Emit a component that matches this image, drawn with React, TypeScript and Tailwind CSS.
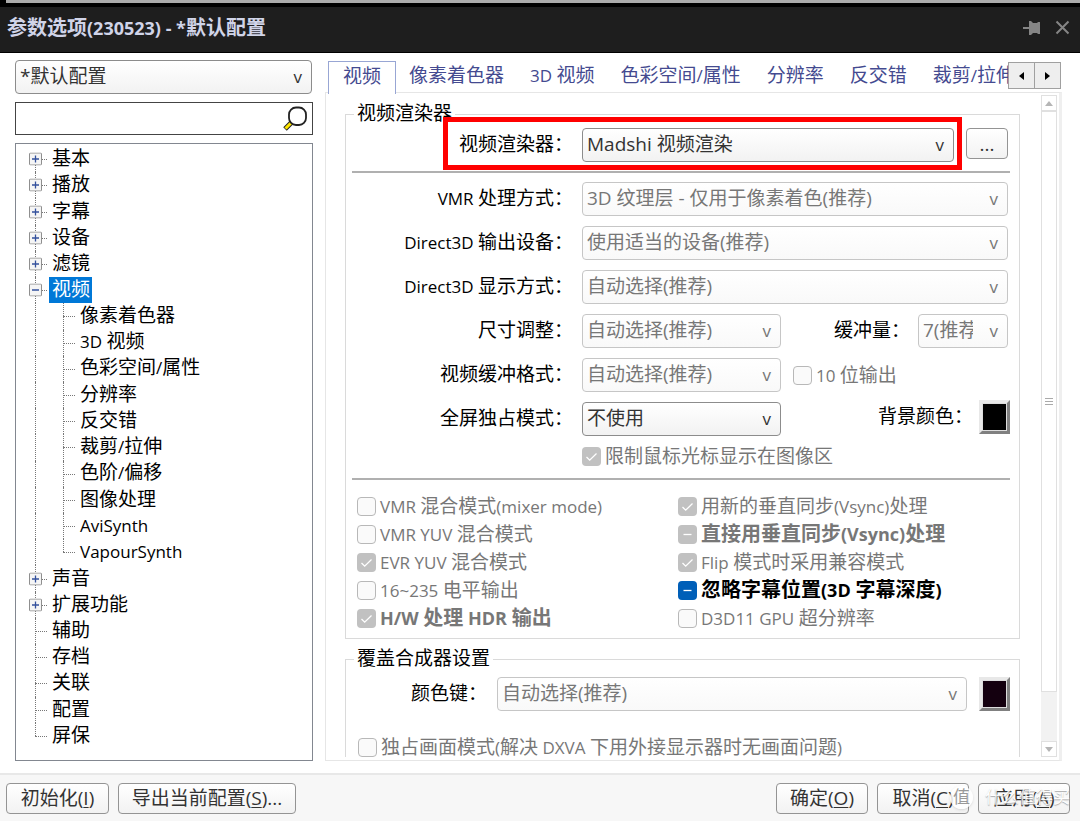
import { Fragment, useState } from "react";
import type { ReactNode } from "react";
import clsx from "clsx";

type CheckState = "off" | "on" | "mixed";

const TREE = [
  { label: "基本", level: 0, box: "+" },
  { label: "播放", level: 0, box: "+" },
  { label: "字幕", level: 0, box: "+" },
  { label: "设备", level: 0, box: "+" },
  { label: "滤镜", level: 0, box: "+" },
  { label: "视频", level: 0, box: "-" },
  { label: "像素着色器", level: 1 },
  { label: "3D 视频", level: 1 },
  { label: "色彩空间/属性", level: 1 },
  { label: "分辨率", level: 1 },
  { label: "反交错", level: 1 },
  { label: "裁剪/拉伸", level: 1 },
  { label: "色阶/偏移", level: 1 },
  { label: "图像处理", level: 1 },
  { label: "AviSynth", level: 1 },
  { label: "VapourSynth", level: 1, last: true },
  { label: "声音", level: 0, box: "+" },
  { label: "扩展功能", level: 0, box: "+" },
  { label: "辅助", level: 0 },
  { label: "存档", level: 0 },
  { label: "关联", level: 0 },
  { label: "配置", level: 0 },
  { label: "屏保", level: 0, last: true },
];

const TABS = ["视频", "像素着色器", "3D 视频", "色彩空间/属性", "分辨率", "反交错", "裁剪/拉伸"];

const OPTIONS: { label: string; state: CheckState; bold?: boolean; enabled?: boolean }[] = [
  { label: "VMR 混合模式(mixer mode)", state: "off" },
  { label: "用新的垂直同步(Vsync)处理", state: "on" },
  { label: "VMR YUV 混合模式", state: "off" },
  { label: "直接用垂直同步(Vsync)处理", state: "mixed", bold: true },
  { label: "EVR YUV 混合模式", state: "on" },
  { label: "Flip 模式时采用兼容模式", state: "on" },
  { label: "16~235 电平输出", state: "off" },
  { label: "忽略字幕位置(3D 字幕深度)", state: "mixed", bold: true, enabled: true },
  { label: "H/W 处理 HDR 输出", state: "on", bold: true },
  { label: "D3D11 GPU 超分辨率", state: "off" },
];

// Latin runs are set a little smaller than the Chinese around them
function Mixed({ text, bold }: { text: string; bold?: boolean }) {
  return (
    <span className={clsx(bold && "text-[20px] font-bold")}>
      {text.split(/([\x20-\x7e]+)/).map((part, i) =>
        i % 2 ? (
          <span key={i} className={bold ? "text-[18px]" : "text-[17px]"}>
            {part}
          </span>
        ) : (
          <Fragment key={i}>{part}</Fragment>
        )
      )}
    </span>
  );
}

function Combo({ id, value, disabled, label, className }: { id: string; value: string; disabled?: boolean; label?: string; className?: string }) {
  return (
    <div className={clsx("relative h-[34px]", className)}>
      <select
        id={id}
        disabled={disabled}
        aria-label={label}
        className="h-full w-full appearance-none rounded-sm border border-[#8c8c8c] bg-linear-to-b from-white to-[#f2f2f2] pr-[34px] pb-0.5 pl-1 text-[#333] disabled:border-[#c6c6c6] disabled:to-[#f9f9f9] disabled:text-[#777] disabled:opacity-100"
      >
        <option>{value}</option>
      </select>
      <span
        aria-hidden="true"
        className={clsx("pointer-events-none absolute inset-y-0 right-[10px] flex items-center text-[17px]", disabled ? "text-[#777]" : "text-[#333]")}
      >
        v
      </span>
    </div>
  );
}

function Check({ label, state = "off", bold, enabled, className }: { label: string; state?: CheckState; bold?: boolean; enabled?: boolean; className?: string }) {
  return (
    <label className={clsx("flex h-7 items-center gap-1 whitespace-nowrap", enabled ? "text-black" : "text-[#777]", className)}>
      <span className="relative size-[19px] shrink-0">
        <input
          type="checkbox"
          disabled={!enabled}
          defaultChecked={state === "on"}
          ref={(el) => {
            if (el) el.indeterminate = state === "mixed";
          }}
          className={clsx(
            "block size-[19px] appearance-none rounded",
            state === "off" && "border border-[#b8b8b8] bg-[#fafafa]",
            state !== "off" && (enabled ? "bg-[#005fb8]" : "bg-[#c1c1c1]")
          )}
        />
        {state !== "off" && (
          <svg viewBox="0 0 19 19" className="pointer-events-none absolute inset-0 size-[19px]" fill="none" stroke="#fff" strokeWidth="1.3">
            {state === "on" ? <path d="M4.5 10l3.2 3.2L14.5 6.5" /> : <path d="M5.500 9.500h8" />}
          </svg>
        )}
      </span>
      <Mixed text={label} bold={bold} />
    </label>
  );
}

function Row({ id, label, value, disabled = true, wide, children }: { id: string; label: string; value: string; disabled?: boolean; wide?: boolean; children?: ReactNode }) {
  return (
    <div className="flex h-[34px] items-center">
      <label htmlFor={id} className="mr-[9px] w-[221px] shrink-0 pb-0.5 text-right whitespace-nowrap">
        <Mixed text={label} />
      </label>
      <Combo id={id} value={value} disabled={disabled} className={wide ? "mr-0.5 flex-1" : "w-[199px] shrink-0"} />
      {children}
    </div>
  );
}

function Swatch({ label, fill }: { label: string; fill: string }) {
  return (
    <button
      aria-label={label}
      className="flex size-[31px] h-[34px] shrink-0 border-[3px] border-t-[#e8e8e8] border-r-[#808080] border-b-[#808080] border-l-[#e8e8e8] bg-[#ddd] p-px"
    >
      <span className={clsx("size-full", fill)} />
    </button>
  );
}

function TreeRow({ label, level, box, last, active, onPick }: { label: string; level: number; box?: string; last?: boolean; active: boolean; onPick: () => void }) {
  const rootEnd = level === 0 && last;
  return (
    <li role="treeitem" aria-level={level + 1} aria-selected={active} className="flex min-h-0 pl-[7px]">
      <span className="relative w-[26px] shrink-0">
        <span
          className={clsx(
            "absolute left-3 border-l border-dotted border-[#777]",
            label === "基本" ? "top-1/2 bottom-0" : rootEnd ? "top-0 bottom-1/2" : "inset-y-0"
          )}
        />
        {level === 0 && <span className="absolute top-1/2 right-0.5 left-3 border-t border-dotted border-[#777]" />}
        {box && (
          <svg viewBox="0 0 13 13" className="absolute top-1/2 left-1.5 size-[13px] -translate-y-1/2">
            <rect x="0.5" y="0.5" width="12" height="12" rx="1" fill="#f5f5f5" stroke="#8f8f8f" />
            <path d={box === "+" ? "M3 6.500h7M6.500 3v7" : "M3 6.500h7"} stroke="#33509c" strokeWidth="1.3" />
          </svg>
        )}
      </span>
      {level === 1 && (
        <span className="relative w-7 shrink-0">
          <span className={clsx("absolute top-0 left-[14px] border-l border-dotted border-[#777]", last ? "bottom-1/2" : "bottom-0")} />
          <span className="absolute top-1/2 right-0.5 left-[14px] border-t border-dotted border-[#777]" />
        </span>
      )}
      <button onClick={onPick} className={clsx("flex items-center pr-0.5 pb-0.5 pl-[3px] whitespace-nowrap", active && "bg-[#0078d7] text-white")}>
        <Mixed text={label} />
      </button>
    </li>
  );
}

function PushButton({ children, className }: { children: ReactNode; className?: string }) {
  return (
    <button className={clsx("h-[31px] rounded-sm border border-[#949494] bg-linear-to-b from-white to-[#f2f2f2] whitespace-nowrap text-[#333]", className)}>
      {children}
    </button>
  );
}

function Hotkey({ k }: { k: string }) {
  return (
    <span>
      (<u className="underline-offset-2">{k}</u>)
    </span>
  );
}

export default function App() {
  const [section, setSection] = useState("视频");
  const [tab, setTab] = useState("视频");

  return (
    <div className="flex h-screen flex-col overflow-hidden bg-white font-['Open_Sans','Noto_Sans_CJK_SC',sans-serif] text-[19px] leading-[26px] text-black">
      {/* Title bar */}
      <div className="h-[3px] shrink-0 border-l-[6px] border-black bg-[#ababab]" />
      <header className="flex h-[50px] shrink-0 items-center justify-between border-t-4 border-b border-black bg-[#1e1e1e] pr-2.5 pb-1 pl-[7px]">
        <h1 className="text-[#d0d4e8]">
          <Mixed text="参数选项(230523) - *默认配置" bold />
        </h1>
        <div className="flex items-center gap-3.5 text-[#858585]">
          <button aria-label="置顶">
            <svg viewBox="0 0 18 16" className="h-4 w-[18px]" fill="currentColor">
              <path d="M0 7h6V1h2l2 2h4l1-1h2v12h-2l-1-1h-4l-2 2H6V9H0z" />
            </svg>
          </button>
          <button aria-label="关闭">
            <svg viewBox="0 0 15 15" className="size-[15px]" fill="none" stroke="currentColor" strokeWidth="2">
              <path d="M1.5 1.5l12 12M13.5 1.5l-12 12" />
            </svg>
          </button>
        </div>
      </header>

      <main className="flex min-h-0 flex-1 pt-[7px] pr-[18px] pb-3 pl-[15px]">
        {/* Sections */}
        <aside className="mr-3 flex w-[298px] shrink-0 flex-col gap-2">
          <Combo id="profile" value="*默认配置" label="配置" className="mr-px shrink-0" />
          <div className="flex h-[33px] shrink-0 items-center border border-[#444] pr-1">
            <input type="search" aria-label="搜索" className="h-full min-w-0 flex-1 px-1.5 outline-none" />
            <button aria-label="查找">
              <svg viewBox="0 0 25 26" className="h-[26px] w-[25px]" fill="none">
                <path d="M9 16l-7 7" stroke="#222" strokeWidth="5" />
                <path d="M8.5 16.500l-6 6" stroke="#ffe600" strokeWidth="3" />
                <rect x="6" y="1.500" width="17" height="17.500" rx="7" fill="#fff" stroke="#222" strokeWidth="1.800" />
              </svg>
            </button>
          </div>
          <ul role="tree" aria-label="选项" className="grid min-h-0 flex-1 auto-rows-fr border border-[#828790] pt-0.5 pb-[11px]">
            {TREE.map((item) => (
              <TreeRow key={item.label} {...item} active={section === item.label} onPick={() => setSection(item.label)} />
            ))}
          </ul>
        </aside>

        {/* Settings page */}
        <section className="flex min-w-0 flex-1 flex-col">
          <div className="relative z-10 -mb-0.5 flex shrink-0 pl-[3px]">
            <div role="tablist" className="flex min-w-0 flex-1 overflow-hidden">
              {TABS.map((name) => (
                <button
                  key={name}
                  role="tab"
                  aria-selected={tab === name}
                  onClick={() => setTab(name)}
                  className={clsx(
                    "h-[33px] shrink-0 whitespace-nowrap text-[#444a90]",
                    tab === name ? "mt-px border border-b-0 border-[#98a6d4] bg-white px-3.5 pb-1" : "px-[13px] pb-[3px]"
                  )}
                >
                  <Mixed text={name} />
                </button>
              ))}
            </div>
            <div className="mt-0.5 mr-px flex h-[27px] shrink-0">
              <button aria-label="向左" className="flex w-[27px] items-center justify-center border border-[#a0a0a0] bg-[#eee]">
                <svg viewBox="0 0 5 8" className="h-2 w-[5px]"><path d="M5 0v8L0 4z" /></svg>
              </button>
              <button aria-label="向右" className="-ml-px flex w-[27px] items-center justify-center border border-[#a0a0a0] bg-[#eee]">
                <svg viewBox="0 0 5 8" className="h-2 w-[5px]"><path d="M0 0v8l5-4z" /></svg>
              </button>
            </div>
          </div>

          <div className="flex min-h-0 flex-1 border border-r-[3px] border-[#e6e6e6] border-r-[#efefef] pb-[3px]">
            <div className="min-w-0 flex-1 overflow-hidden pt-[7px] pr-[21px] pl-[19px]">
              <fieldset className="min-w-0 border border-[#dadada] pr-[9px] pb-1.5 pl-1.5">
                <legend className="ml-0.5 px-[3px] pb-0.5 leading-[26px]">视频渲染器</legend>
                <div className="flex">
                  <div className="relative flex-1">
                    <Row id="renderer" label="视频渲染器：" value="Madshi 视频渲染" disabled={false} wide />
                    <div className="pointer-events-none absolute -top-[11px] -right-[6px] -bottom-2 left-[91px] border-[5px] border-[#f00]" />
                  </div>
                  <PushButton className="mr-0.5 ml-2.5 w-[42px]">...</PushButton>
                </div>
                <hr className="mt-[9px] mb-[9px] border-t-2 border-[#b0b0b0]" />
                <div className="flex flex-col gap-2.5">
                  <Row id="vmr" label="VMR 处理方式：" value="3D 纹理层 - 仅用于像素着色(推荐)" wide />
                  <Row id="d3d-out" label="Direct3D 输出设备：" value="使用适当的设备(推荐)" wide />
                  <Row id="d3d-show" label="Direct3D 显示方式：" value="自动选择(推荐)" wide />
                  <Row id="resize" label="尺寸调整：" value="自动选择(推荐)">
                    <label htmlFor="buffers" className="mr-2 ml-auto pb-0.5">缓冲量：</label>
                    <Combo id="buffers" value="7(推荐)" disabled className="mr-0.5 w-[90px]" />
                  </Row>
                  <Row id="surface" label="视频缓冲格式：" value="自动选择(推荐)">
                    <Check label="10 位输出" className="ml-3" />
                  </Row>
                  <Row id="exclusive" label="全屏独占模式：" value="不使用" disabled={false}>
                    <div className="mb-1 ml-auto flex items-center gap-1.5">
                      <span className="pb-0.5">背景颜色：</span>
                      <Swatch label="背景颜色" fill="bg-black" />
                    </div>
                  </Row>
                </div>
                <Check label="限制鼠标光标显示在图像区" state="on" className="mt-1.5 ml-[230px]" />
                <hr className="mt-2 mb-3 border-t-2 border-[#b0b0b0]" />
                <div className="grid grid-cols-[321px_1fr] pl-[5px]">
                  {OPTIONS.map((option) => (
                    <Check key={option.label} {...option} />
                  ))}
                </div>
              </fieldset>

              <fieldset className="mt-1.5 min-w-0 border border-[#dadada] pr-[9px] pb-3 pl-1.5">
                <legend className="ml-0.5 px-[3px] pb-0.5 leading-[26px]">覆盖合成器设置</legend>
                <div className="mt-1 flex items-center">
                  <label htmlFor="color-key" className="mr-2.5 w-[135px] shrink-0 pb-0.5 text-right">颜色键：</label>
                  <Combo id="color-key" value="自动选择(推荐)" disabled className="mr-3 flex-1" />
                  <Swatch label="颜色键" fill="bg-[#14000f]" />
                </div>
                <Check label="独占画面模式(解决 DXVA 下用外接显示器时无画面问题)" className="mt-[22px] ml-1.5" />
              </fieldset>
            </div>

            {/* Scroll bar */}
            <div aria-hidden="true" className="mt-0.5 mr-0.5 flex w-4 shrink-0 flex-col bg-[#f2f2f2]">
              <div className="flex h-4 items-center justify-center border border-[#e0e0e0] bg-white">
                <svg viewBox="0 0 8 5" className="h-[5px] w-2" fill="#b5b5b5"><path d="M0 5h8L4 0z" /></svg>
              </div>
              <div className="flex flex-[581] flex-col items-center justify-center gap-0.5 border border-[#e0e0e0] bg-white">
                <span className="h-px w-2 bg-[#aaa]" />
                <span className="h-px w-2 bg-[#aaa]" />
                <span className="h-px w-2 bg-[#aaa]" />
              </div>
              <div className="flex-[49]" />
              <div className="flex h-4 items-center justify-center border border-[#e0e0e0] bg-white">
                <svg viewBox="0 0 8 5" className="h-[5px] w-2" fill="#b5b5b5"><path d="M0 0h8L4 5z" /></svg>
              </div>
            </div>
          </div>
        </section>
      </main>

      {/* Buttons */}
      <footer className="relative flex h-12 shrink-0 items-center gap-[9px] border-t-2 border-[#e8e8e8] bg-[#f7f7f7] pr-2.5 pl-1.5">
        <PushButton className="w-[103px]">初始化<Hotkey k="I" /></PushButton>
        <PushButton className="mr-auto w-[178px]">导出当前配置<Hotkey k="S" />...</PushButton>
        <PushButton className="w-[92px]">确定<Hotkey k="O" /></PushButton>
        <PushButton className="w-[92px]">取消<Hotkey k="C" /></PushButton>
        <PushButton className="w-[92px]">应用<Hotkey k="A" /></PushButton>
        <div className="pointer-events-none absolute right-2.5 bottom-[11px] flex items-center gap-3 text-white">
          <span className="flex size-[23px] items-center justify-center rounded-full bg-white/85 text-[17px] text-[#999] shadow-sm">值</span>
          <span className="text-[17px] opacity-85 text-shadow-[0_1px_1px_#999]">什么值得买</span>
        </div>
      </footer>
    </div>
  );
}
